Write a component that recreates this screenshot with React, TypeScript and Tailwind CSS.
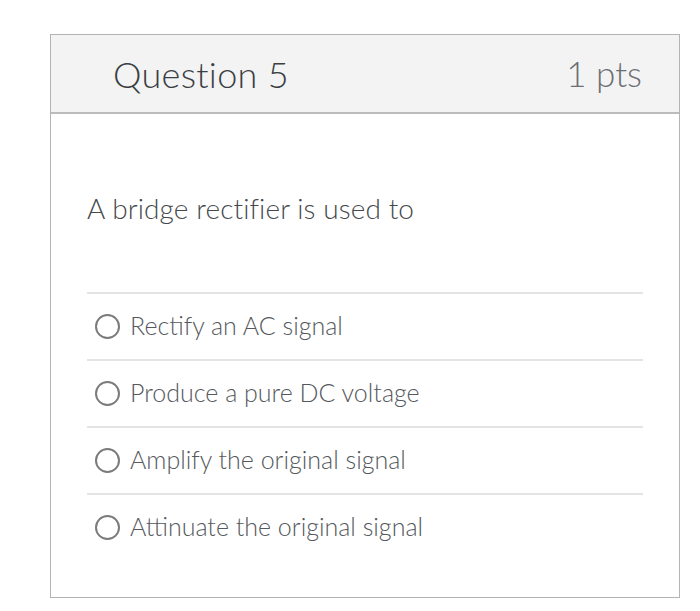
const answers = [
  'Rectify an AC signal',
  'Produce a pure DC voltage',
  'Amplify the original signal',
  'Attinuate the original signal',
];

export default function App() {
  return (
    <div className="w-[700px] h-[611px] bg-white pt-[34px] pl-[50px] font-['Lato',_'Open_Sans',_sans-serif] font-light">
      <div className="w-[630px] h-[564px] border border-[#b4b4b4] flex flex-col">
        <div className="h-[79px] bg-[#f3f3f3] border-b-2 border-[#bcbcbc] flex items-center justify-between pl-[62px] pr-[37px]">
          <h2 className="text-[36px] tracking-[0.3px] text-[#3a3f44] leading-none">Question 5</h2>
          <span className="text-[35px] text-[#6b6f73] leading-none">1 pts</span>
        </div>
        <div className="px-[36px] pt-[76px]">
          <p className="text-[28px] tracking-[0.1px] text-[#45494d] leading-[36px]">A bridge rectifier is used to</p>
          <div className="mt-[66px]">
            {answers.map((a) => (
              <div key={a} className="h-[67px] border-t-2 border-[#e4e4e4] flex items-center pb-[3px]">
                <span className="ml-[8px] mt-[3px] w-[25px] h-[25px] rounded-full border-2 border-[#7b7b7b] shrink-0" />
                <span className="ml-[10px] text-[25px] text-[#55595d] leading-none">{a}</span>
              </div>
            ))}
          </div>
        </div>
      </div>
    </div>
  );
}
